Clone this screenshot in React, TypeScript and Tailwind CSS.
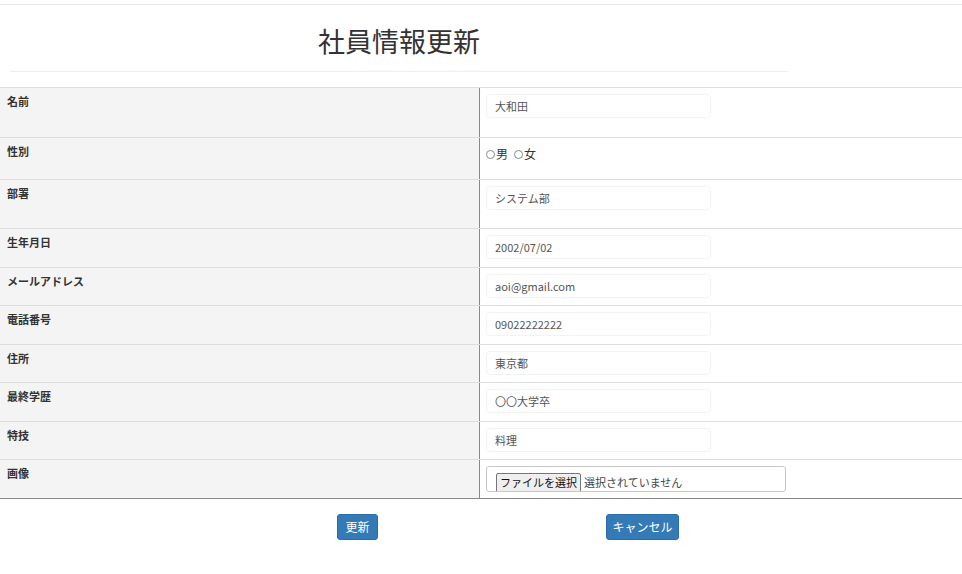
import React from "react";

const font = { fontFamily: '"Noto Sans CJK JP", "Noto Sans", sans-serif' };

type Row = { label: string; h: string; kind: "input" | "radio" | "file"; value?: string };

const rows: Row[] = [
  { label: "名前", h: "h-[50px]", kind: "input", value: "大和田" },
  { label: "性別", h: "h-[42px]", kind: "radio" },
  { label: "部署", h: "h-[49px]", kind: "input", value: "システム部" },
  { label: "生年月日", h: "h-[39px]", kind: "input", value: "2002/07/02" },
  { label: "メールアドレス", h: "h-[38px]", kind: "input", value: "aoi@gmail.com" },
  { label: "電話番号", h: "h-[39px]", kind: "input", value: "09022222222" },
  { label: "住所", h: "h-[38px]", kind: "input", value: "東京都" },
  { label: "最終学歴", h: "h-[39px]", kind: "input", value: "〇〇大学卒" },
  { label: "特技", h: "h-[38px]", kind: "input", value: "料理" },
  { label: "画像", h: "h-[39px]", kind: "file" },
];

function Radio({ label }: { label: string }) {
  return (
    <span className="flex items-center">
      <span className="inline-block w-[9px] h-[9px] rounded-full border border-[#8a8a8a] mr-[1px]" />
      <span className="text-[12px] leading-[16px] text-[#333]">{label}</span>
    </span>
  );
}

export default function App() {
  return (
    <div className="w-[962px] h-[574px] bg-white overflow-hidden leading-none" style={font}>
      <div className="pt-[4px]">
        <div className="border-t border-[#e8e8e8]" />
      </div>
      <div className="ml-[10px] w-[778px] border-b border-[#eeeeee] pt-[16px] pb-[10px] flex justify-center">
        <h1 className="text-[27px] leading-[40px] font-normal text-[#333]">社員情報更新</h1>
      </div>
      <div className="mt-[15px] border-t border-[#dddddd]">
        {rows.map((r, i) => (
          <div
            key={r.label}
            className={`flex ${r.h} border-b ${i === rows.length - 1 ? "border-[#888888]" : "border-[#dddddd]"}`}
          >
            <div className="w-[480px] shrink-0 bg-[#f4f4f4] border-r border-[#888888] pl-[7px] pt-[5px] text-[11px] leading-[16px] font-bold text-[#333]">
              {r.label}
            </div>
            <div className="flex-1 pl-[6px] pt-[6px]">
              {r.kind === "input" && (
                <div className="w-[225px] h-[24px] border border-[#f3f3f3] rounded-[4px] px-[8px] flex items-center">
                  <span className="text-[11px] leading-[16px] text-[#555]">{r.value}</span>
                </div>
              )}
              {r.kind === "radio" && (
                <div className="flex items-center gap-[6px] pt-[2px]">
                  <Radio label="男" />
                  <Radio label="女" />
                </div>
              )}
              {r.kind === "file" && (
                <div className="w-[300px] h-[26px] border border-[#c8c8c8] rounded-[3px] flex items-start pl-[9px] pt-[6px] overflow-hidden">
                  <span className="h-[22px] w-[85px] flex justify-center bg-[#efefef] border border-[#767676] rounded-[2px] text-[11px] leading-[16px] text-[#111] shrink-0">
                    ファイルを選択
                  </span>
                  <span className="ml-[3px] pt-[1px] text-[11px] leading-[16px] text-[#444]">選択されていません</span>
                </div>
              )}
            </div>
          </div>
        ))}
      </div>
      <div className="mt-[15px] flex">
        <button className="ml-[337px] w-[41px] h-[26px] bg-[#337ab7] border border-[#2e6da4] rounded-[3px] text-white text-[12px] flex items-center justify-center">
          更新
        </button>
        <button className="ml-[228px] w-[73px] h-[26px] bg-[#337ab7] border border-[#2e6da4] rounded-[3px] text-white text-[12px] flex items-center justify-center">
          キャンセル
        </button>
      </div>
    </div>
  );
}
